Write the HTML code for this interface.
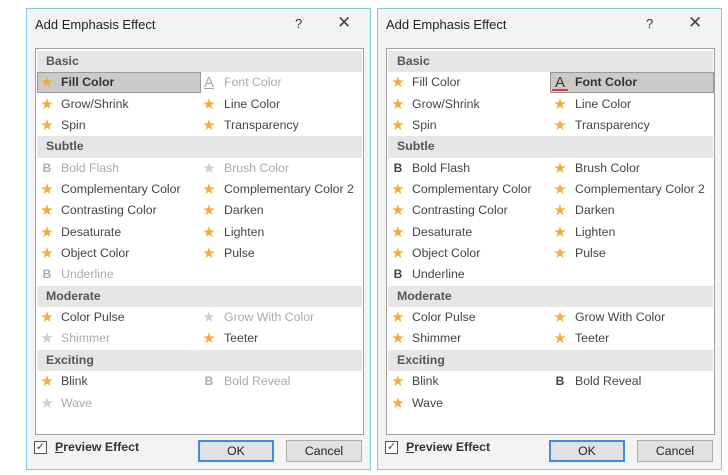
<!DOCTYPE html>
<html><head><meta charset="utf-8"><style>
*{margin:0;padding:0;box-sizing:border-box}
body{width:728px;height:475px;background:#fff;position:relative;overflow:hidden;font-family:"Liberation Sans",sans-serif;font-size:12.3px;color:#444}
.dlg{position:absolute;top:8px;width:345px;height:462px;border:1px solid #7fcbdc;background:#f3f3f3}
.title{position:absolute;left:8px;top:8px;font-size:13px;color:#222}
.q{position:absolute;left:268px;top:7px;font-size:13px;color:#333}
.x{position:absolute;left:310px;top:4px;font-size:17px;color:#444;font-weight:normal}
.list{position:absolute;left:8px;top:39px;width:329px;height:387px;border:1px solid #a0a0a0;background:#fff;padding-top:2px}
.row{position:relative;margin-left:1px;width:325px;height:21.35px;line-height:21px}
.hdr{background:#e6e6e6;font-weight:bold;padding-left:9px;color:#555}
.it{position:absolute;top:0;height:21px;line-height:21px;white-space:nowrap}
.ic{position:absolute;top:0;width:16px;text-align:center;font-size:15px;line-height:21px}
.s{color:#f0ad3c}
.d{color:#aaa}
.ds{color:#cfcfcf}
.b{font-weight:bold;font-size:12px;color:#444}
.db{font-weight:bold;font-size:12px;color:#aaa}
.sel{position:absolute;top:0;height:21px;background:#cacaca;border:1px solid #999}
.chk{position:absolute;left:7px;top:432px;width:13px;height:13px;border:1px solid #555;background:#fff;font-size:11px;line-height:11px;text-align:center}
.pv{position:absolute;left:28px;top:431px;font-weight:bold;color:#333}
.btn{position:absolute;top:431px;width:76px;height:22px;border:1px solid #adadad;background:#e1e1e1;text-align:center;line-height:20px;color:#222}
.ok{left:171px;border:2px solid #3c8fdc;line-height:18px}
.cn{left:259px}
</style></head><body>

<div class="dlg" style="left:26px">
<div class="title">Add Emphasis Effect</div><div class="q">?</div><div class="x">✕</div>
<div class="list">
<div class="row hdr">Basic</div>
<div class="row"><div class="sel" style="left:0;width:164px"></div><span class="ic s" style="left:2px">★</span><span class="it" style="left:24px;font-weight:bold;color:#333">Fill Color</span><span class="ic d" style="left:164px;text-decoration:underline">A</span><span class="it d" style="left:187px">Font Color</span></div>
<div class="row"><span class="ic s" style="left:2px">★</span><span class="it" style="left:24px">Grow/Shrink</span><span class="ic s" style="left:164px">★</span><span class="it" style="left:187px">Line Color</span></div>
<div class="row"><span class="ic s" style="left:2px">★</span><span class="it" style="left:24px">Spin</span><span class="ic s" style="left:164px">★</span><span class="it" style="left:187px">Transparency</span></div>
<div class="row hdr">Subtle</div>
<div class="row"><span class="ic db" style="left:2px">B</span><span class="it d" style="left:24px">Bold Flash</span><span class="ic ds" style="left:164px">★</span><span class="it d" style="left:187px">Brush Color</span></div>
<div class="row"><span class="ic s" style="left:2px">★</span><span class="it" style="left:24px">Complementary Color</span><span class="ic s" style="left:164px">★</span><span class="it" style="left:187px">Complementary Color 2</span></div>
<div class="row"><span class="ic s" style="left:2px">★</span><span class="it" style="left:24px">Contrasting Color</span><span class="ic s" style="left:164px">★</span><span class="it" style="left:187px">Darken</span></div>
<div class="row"><span class="ic s" style="left:2px">★</span><span class="it" style="left:24px">Desaturate</span><span class="ic s" style="left:164px">★</span><span class="it" style="left:187px">Lighten</span></div>
<div class="row"><span class="ic s" style="left:2px">★</span><span class="it" style="left:24px">Object Color</span><span class="ic s" style="left:164px">★</span><span class="it" style="left:187px">Pulse</span></div>
<div class="row"><span class="ic db" style="left:2px">B</span><span class="it d" style="left:24px">Underline</span></div>
<div class="row hdr">Moderate</div>
<div class="row"><span class="ic s" style="left:2px">★</span><span class="it" style="left:24px">Color Pulse</span><span class="ic ds" style="left:164px">★</span><span class="it d" style="left:187px">Grow With Color</span></div>
<div class="row"><span class="ic ds" style="left:2px">★</span><span class="it d" style="left:24px">Shimmer</span><span class="ic s" style="left:164px">★</span><span class="it" style="left:187px">Teeter</span></div>
<div class="row hdr">Exciting</div>
<div class="row"><span class="ic s" style="left:2px">★</span><span class="it" style="left:24px">Blink</span><span class="ic db" style="left:164px">B</span><span class="it d" style="left:187px">Bold Reveal</span></div>
<div class="row"><span class="ic ds" style="left:2px">★</span><span class="it d" style="left:24px">Wave</span></div>
</div>
<div class="chk">✓</div><div class="pv"><u>P</u>review Effect</div>
<div class="btn ok">OK</div><div class="btn cn">Cancel</div>
</div>

<div class="dlg" style="left:377px">
<div class="title">Add Emphasis Effect</div><div class="q">?</div><div class="x">✕</div>
<div class="list">
<div class="row hdr">Basic</div>
<div class="row"><div class="sel" style="left:162px;width:164px"></div><span class="ic s" style="left:2px">★</span><span class="it" style="left:24px">Fill Color</span><span class="ic" style="left:164px;color:#333;border-bottom:2px solid #c44;height:17px;line-height:17px;top:2px">A</span><span class="it" style="left:187px;font-weight:bold;color:#333">Font Color</span></div>
<div class="row"><span class="ic s" style="left:2px">★</span><span class="it" style="left:24px">Grow/Shrink</span><span class="ic s" style="left:164px">★</span><span class="it" style="left:187px">Line Color</span></div>
<div class="row"><span class="ic s" style="left:2px">★</span><span class="it" style="left:24px">Spin</span><span class="ic s" style="left:164px">★</span><span class="it" style="left:187px">Transparency</span></div>
<div class="row hdr">Subtle</div>
<div class="row"><span class="ic b" style="left:2px">B</span><span class="it" style="left:24px">Bold Flash</span><span class="ic s" style="left:164px">★</span><span class="it" style="left:187px">Brush Color</span></div>
<div class="row"><span class="ic s" style="left:2px">★</span><span class="it" style="left:24px">Complementary Color</span><span class="ic s" style="left:164px">★</span><span class="it" style="left:187px">Complementary Color 2</span></div>
<div class="row"><span class="ic s" style="left:2px">★</span><span class="it" style="left:24px">Contrasting Color</span><span class="ic s" style="left:164px">★</span><span class="it" style="left:187px">Darken</span></div>
<div class="row"><span class="ic s" style="left:2px">★</span><span class="it" style="left:24px">Desaturate</span><span class="ic s" style="left:164px">★</span><span class="it" style="left:187px">Lighten</span></div>
<div class="row"><span class="ic s" style="left:2px">★</span><span class="it" style="left:24px">Object Color</span><span class="ic s" style="left:164px">★</span><span class="it" style="left:187px">Pulse</span></div>
<div class="row"><span class="ic b" style="left:2px">B</span><span class="it" style="left:24px">Underline</span></div>
<div class="row hdr">Moderate</div>
<div class="row"><span class="ic s" style="left:2px">★</span><span class="it" style="left:24px">Color Pulse</span><span class="ic s" style="left:164px">★</span><span class="it" style="left:187px">Grow With Color</span></div>
<div class="row"><span class="ic s" style="left:2px">★</span><span class="it" style="left:24px">Shimmer</span><span class="ic s" style="left:164px">★</span><span class="it" style="left:187px">Teeter</span></div>
<div class="row hdr">Exciting</div>
<div class="row"><span class="ic s" style="left:2px">★</span><span class="it" style="left:24px">Blink</span><span class="ic b" style="left:164px">B</span><span class="it" style="left:187px">Bold Reveal</span></div>
<div class="row"><span class="ic s" style="left:2px">★</span><span class="it" style="left:24px">Wave</span></div>
</div>
<div class="chk">✓</div><div class="pv"><u>P</u>review Effect</div>
<div class="btn ok">OK</div><div class="btn cn">Cancel</div>
</div>
</body></html>
